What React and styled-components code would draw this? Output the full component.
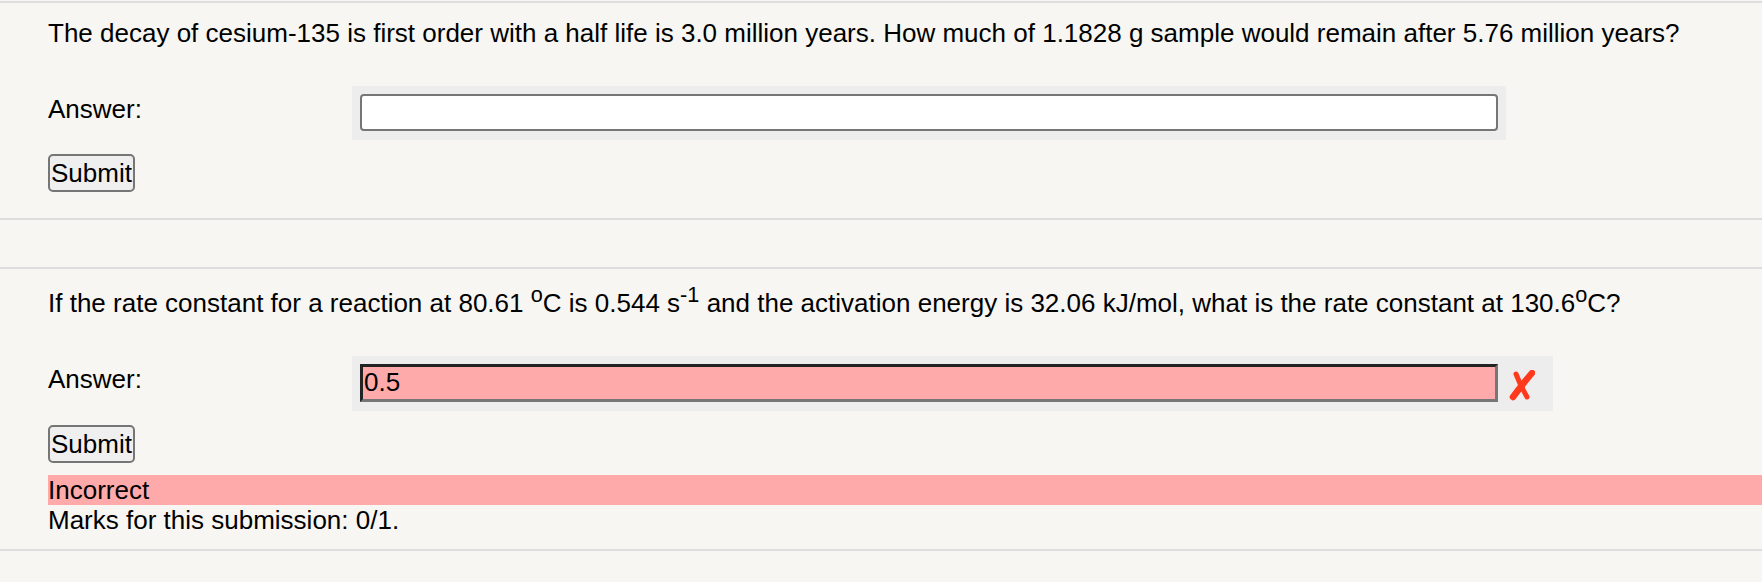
import React from "react";
import styled, { createGlobalStyle } from "styled-components";

const GlobalStyle = createGlobalStyle`
  html, body {
    margin: 0;
    padding: 0;
    background: #f7f6f2;
  }
  body {
    font-family: "Liberation Sans", Arial, sans-serif;
    font-size: 26px;
    line-height: 30px;
    color: #000;
  }
`;

const Page = styled.div`
  padding-top: 1px;
  padding-bottom: 32px;
`;

const Question = styled.div`
  border-top: 2px solid #dddddd;
  border-bottom: 2px solid #dddddd;
  padding: 15px 0 14px 48px;
  & + & {
    margin-top: 47px;
  }
`;

const QuestionText = styled.div`
  margin-bottom: 38px;
  white-space: nowrap;
  sup {
    font-size: 21.7px;
    line-height: 1;
  }
`;

const AnswerRow = styled.div`
  display: flex;
  align-items: flex-start;
`;

const AnswerLabel = styled.label`
  width: 304px;
  flex-shrink: 0;
  padding-top: 8px;
`;

const AnswerCell = styled.div`
  display: flex;
  align-items: center;
  background: #ededed;
  padding: 8px 8px 9px 8px;
`;

const AnswerInput = styled.input`
  box-sizing: border-box;
  width: 1138px;
  height: ${(p) => (p.$wrong ? "38px" : "37px")};
  margin: 0;
  padding: 0 1px;
  font-family: "Liberation Sans", Arial, sans-serif;
  font-size: 26px;
  line-height: 30px;
  color: #000;
  outline: none;
  background: ${(p) => (p.$wrong ? "#ffaaaa" : "#ffffff")};
  border-radius: ${(p) => (p.$wrong ? "0" : "4px")};
  border-style: solid;
  border-width: ${(p) => (p.$wrong ? "3px" : "2px")};
  border-color: ${(p) =>
    p.$wrong ? "#232323 #767676 #767676 #232323" : "#767676"};
`;

const Cross = styled.svg`
  display: block;
  width: 26px;
  height: 31px;
  margin: 6px 10px 0 11px;
  flex-shrink: 0;
`;

const SubmitButton = styled.button`
  display: block;
  margin: 14px 0 12px 0;
  padding: 2px 1px;
  font-family: "Liberation Sans", Arial, sans-serif;
  font-size: 26px;
  line-height: 30px;
  color: #000;
  background: #efefef;
  border: 2px solid #767676;
  border-radius: 5px;
`;

const Feedback = styled.div`
  background: ${(p) => (p.$tone === "bad" ? "#ffaaaa" : "transparent")};
`;

const CrossIcon = () => (
  <Cross viewBox="0 0 26 31">
    <path
      d="M23 3 C17 10 10 19 4 27"
      stroke="#ff3a1c"
      strokeWidth="6.5"
      strokeLinecap="round"
      fill="none"
    />
    <path
      d="M7 4 C10 12 14 20 18 27"
      stroke="#ff3a1c"
      strokeWidth="5"
      strokeLinecap="round"
      fill="none"
    />
  </Cross>
);

export default function App() {
  return (
    <>
      <GlobalStyle />
      <Page>
        <Question>
          <QuestionText>
            The decay of cesium-135 is first order with a half life is 3.0 million years. How
            much of 1.1828 g sample would remain after 5.76 million years?
          </QuestionText>
          <AnswerRow>
            <AnswerLabel>Answer:</AnswerLabel>
            <AnswerCell>
              <AnswerInput type="text" defaultValue="" />
            </AnswerCell>
          </AnswerRow>
          <SubmitButton type="button">Submit</SubmitButton>
        </Question>

        <Question>
          <QuestionText>
            If the rate constant for a reaction at 80.61 <sup>o</sup>C is 0.544 s<sup>-1</sup>{" "}
            and the activation energy is 32.06 kJ/mol, what is the rate constant at 130.6
            <sup>o</sup>C?
          </QuestionText>
          <AnswerRow>
            <AnswerLabel>Answer:</AnswerLabel>
            <AnswerCell>
              <AnswerInput type="text" defaultValue="0.5" $wrong />
              <CrossIcon />
            </AnswerCell>
          </AnswerRow>
          <SubmitButton type="button">Submit</SubmitButton>
          <Feedback $tone="bad">Incorrect</Feedback>
          <Feedback>Marks for this submission: 0/1.</Feedback>
        </Question>
      </Page>
    </>
  );
}
